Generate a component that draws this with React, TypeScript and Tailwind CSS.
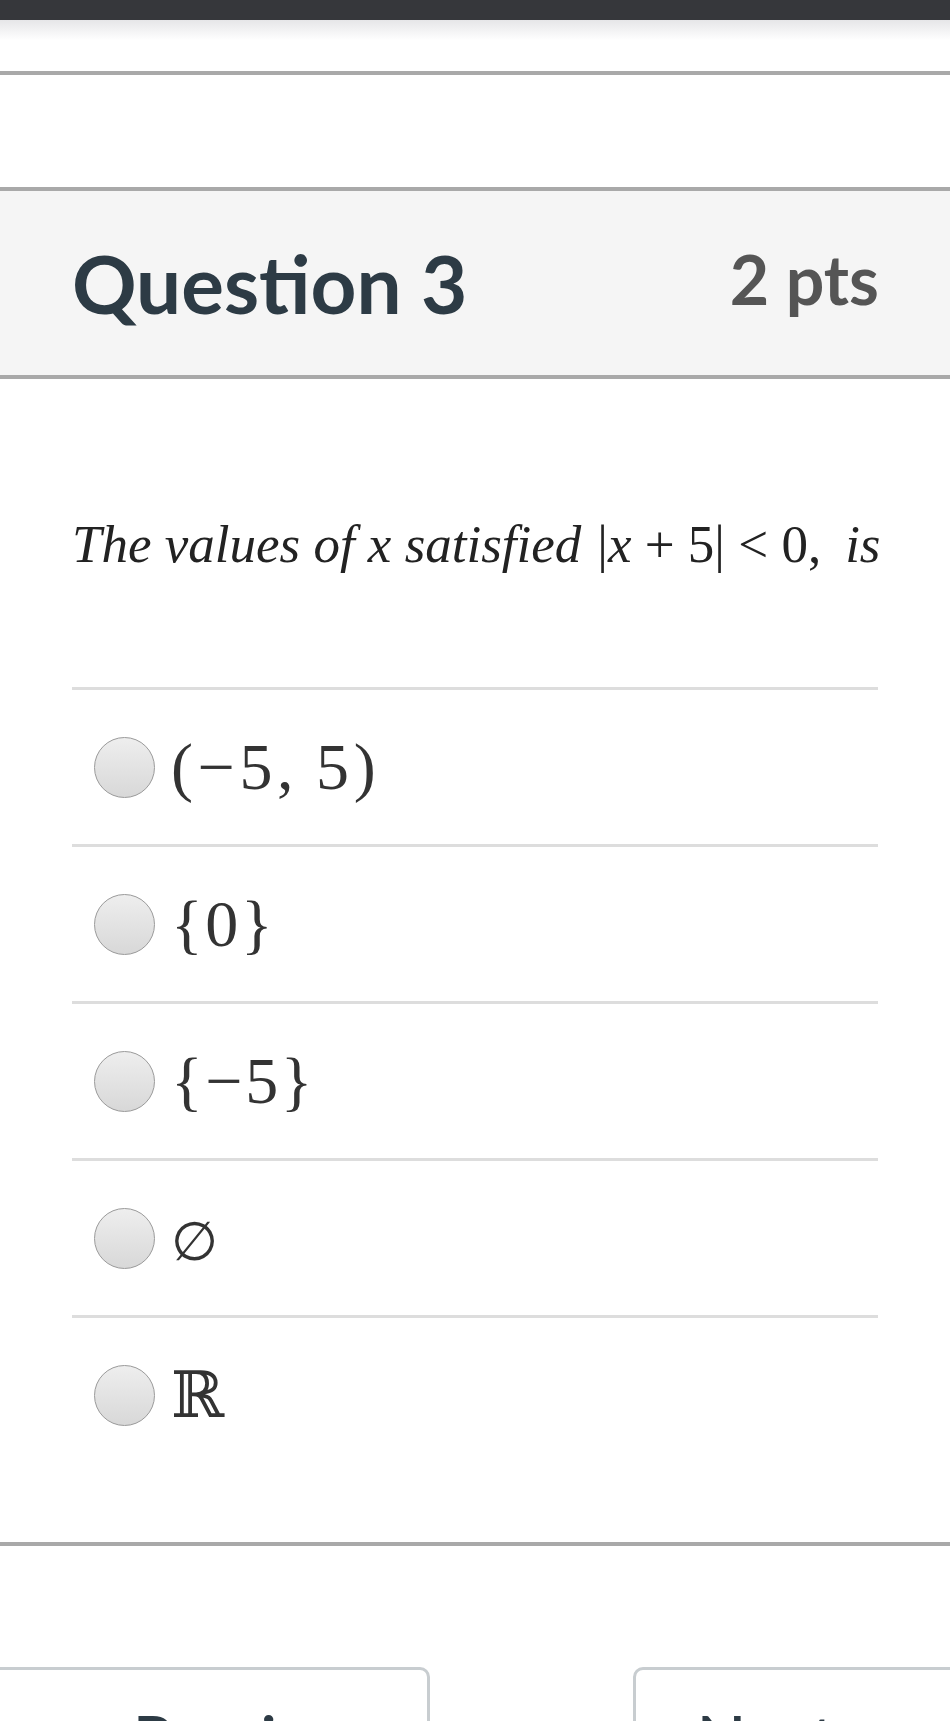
import React from 'react';

const answers = [
  { id: 'a', node: <span className="tracking-[0.07em]">(−5,&#8201;5)</span> },
  { id: 'b', node: <span className="tracking-[0.04em]">{'{0}'}</span> },
  { id: 'c', node: <span className="tracking-[0.04em]">{'{−5}'}</span> },
  { id: 'd', node: <span className="font-['DejaVu_Serif',serif] text-[54px]">∅</span> },
  { id: 'e', node: <span className="font-['DejaVu_Serif',serif] text-[64px]">ℝ</span> },
];

function Radio() {
  return (
    <span className="block h-[61px] w-[61px] shrink-0 rounded-full border border-[#9a9a9a] bg-gradient-to-b from-[#eeeeee] to-[#d8d8d8]" />
  );
}

export default function App() {
  return (
    <div className="min-h-[1721px] overflow-hidden bg-white font-['Lato',sans-serif]">
      {/* top app bar */}
      <div className="h-5 bg-[#36373b]" />
      <div className="h-[51px] bg-gradient-to-b from-[#e6e6e8] via-white via-40% to-white" />
      <div className="h-1 bg-[#a9a9a9]" />
      <div className="h-[112px]" />

      {/* question header */}
      <div className="border-y-4 border-[#a9a9a9] bg-[#f5f5f5]">
        <div className="flex h-[184px] items-center justify-between pl-[72px] pr-[71px]">
          <h2 className="text-[80px] font-bold text-[#2d3b45]">Question 3</h2>
          <span className="mb-2 text-[68px] font-bold text-[#555555]">2 pts</span>
        </div>
      </div>

      {/* question body */}
      <div className="px-[72px]">
        <p className="mt-[134px] whitespace-nowrap font-['Liberation_Serif',serif] text-[53px] leading-[62px] text-[#222222]">
          <i>The values of x satisfied</i>
          <span className="ml-4">|</span>
          <i>x</i> + 5| &lt; 0,
          <i className="ml-6">is</i>
        </p>

        <ul className="mt-[112px]">
          {answers.map((a) => (
            <li
              key={a.id}
              className="flex h-[157px] items-center gap-4 border-t-[3px] border-[#dddddd] pl-[22px]"
            >
              <Radio />
              <span className="font-['Liberation_Serif',serif] text-[66px] leading-none text-[#333333]">
                {a.node}
              </span>
            </li>
          ))}
        </ul>
      </div>

      <div className="mt-[70px] h-1 bg-[#a9a9a9]" />

      {/* nav buttons */}
      <div className="mt-[121px] flex">
        <button className="ml-[-40px] h-[120px] w-[470px] shrink-0 rounded-[10px] border-[3px] border-[#c8cdd0] bg-white pl-[170px] pt-[22px] text-left text-[64px] font-semibold leading-[1.2] text-[#2d3b45]">
          Previous
        </button>
        <button className="ml-[203px] h-[120px] w-[360px] shrink-0 rounded-[10px] border-[3px] border-[#c8cdd0] bg-white pl-[61px] pt-[22px] text-left text-[64px] font-semibold leading-[1.2] text-[#2d3b45]">
          Next
        </button>
      </div>
    </div>
  );
}
